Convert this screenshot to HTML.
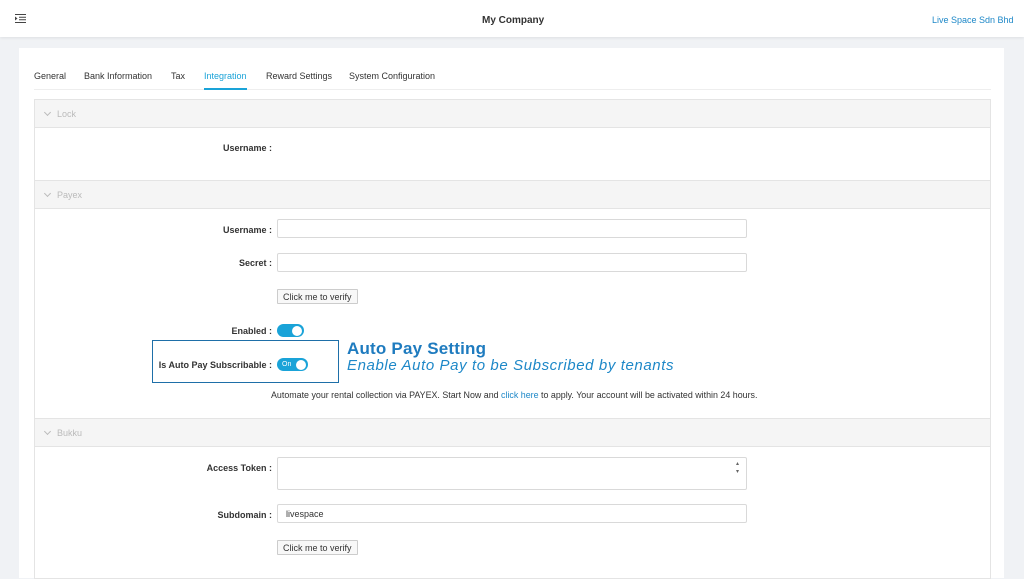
<!DOCTYPE html>
<html><head><style>
*{box-sizing:border-box;margin:0;padding:0}
body{width:1024px;height:566px;overflow:hidden;background:#f0f2f5;font-family:"Liberation Sans",sans-serif;font-size:9px;color:#333;position:relative}
.a{position:absolute}
.hdr{left:0;top:0;width:1024px;height:37px;background:#fff;box-shadow:0 1px 3px rgba(0,0,0,.08)}
.card{left:19px;top:48px;width:985px;height:530px;background:#fff}
.tab{top:71px;font-size:9px;color:#333}
.panel{left:34px;top:99px;width:957px;height:480px;border:1px solid #e4e4e4;background:#fff}
.ph{left:35px;width:955px;height:29px;background:#f5f5f5;border-top:1px solid #e4e4e4;border-bottom:1px solid #e4e4e4;color:#bbb;font-size:9px;line-height:28px;padding-left:22px}
.ph:before{content:"";position:absolute;left:10px;top:10px;width:4px;height:4px;border-right:1px solid #bbb;border-bottom:1px solid #bbb;transform:rotate(45deg)}
.lbl{width:240px;text-align:right;font-weight:bold;color:#333;font-size:9px}
.inp{left:277px;width:470px;height:19px;border:1px solid #d9d9d9;border-radius:2px;background:#fff;font-size:9px;padding:4px 8px}
.btn{left:277px;height:15px;border:1px solid #ccc;background:#f8f8f8;font-size:9px;padding:1px 5px;line-height:12px;border-radius:1px}
.tg{height:13px;border-radius:7px;background:#1aa3d8}
.tg i{position:absolute;width:10px;height:10px;border-radius:50%;background:#fff;top:1.5px}
</style></head><body>
<div class="a hdr"></div>
<svg class="a" style="left:15px;top:14px" width="11" height="9" viewBox="0 0 11 9"><path d="M0 0.5H11M4 3.2H11M4 5.8H11M0 8.5H11" stroke="#444" stroke-width="1"/><path d="M0 2.5L2.5 4.5L0 6.5Z" fill="#444"/></svg>
<div class="a" style="left:482px;top:15px;font-size:10px;font-weight:bold;color:#333">My Company</div>
<div class="a" style="left:932px;top:15px;font-size:9px;color:#1e88c8">Live Space Sdn Bhd</div>
<div class="a card"></div>
<div class="a tab" style="left:34px">General</div>
<div class="a tab" style="left:84px">Bank Information</div>
<div class="a tab" style="left:171px">Tax</div>
<div class="a tab" style="left:204px;color:#1aa3d8">Integration</div>
<div class="a tab" style="left:266px">Reward Settings</div>
<div class="a tab" style="left:349px">System Configuration</div>
<div class="a" style="left:34px;top:89px;width:957px;height:1px;background:#eee"></div>
<div class="a" style="left:204px;top:88px;width:43px;height:2px;background:#1aa3d8"></div>
<div class="a panel"></div>
<div class="a ph" style="top:99px">Lock</div>
<div class="a lbl" style="left:32px;top:143px">Username :</div>
<div class="a ph" style="top:180px">Payex</div>
<div class="a lbl" style="left:32px;top:225px">Username :</div>
<div class="a inp" style="top:219px"></div>
<div class="a lbl" style="left:32px;top:258px">Secret :</div>
<div class="a inp" style="top:253px"></div>
<div class="a btn" style="top:289px">Click me to verify</div>
<div class="a lbl" style="left:32px;top:326px">Enabled :</div>
<div class="a tg" style="left:277px;top:324px;width:27px"><i style="left:15px"></i></div>
<div class="a" style="left:152px;top:340px;width:187px;height:43px;border:1.5px solid #1e6fa8"></div>
<div class="a lbl" style="left:32px;top:360px">Is Auto Pay Subscribable :</div>
<div class="a tg" style="left:277px;top:358px;width:31px"><i style="left:19px"></i><span style="position:absolute;left:5px;top:2.5px;color:#fff;font-size:7px">On</span></div>
<div class="a" style="left:347px;top:339px;font-size:17px;font-weight:bold;color:#1e7bbf;letter-spacing:0.2px">Auto Pay Setting</div>
<div class="a" style="left:347px;top:357px;font-size:15px;font-style:italic;color:#1e88c8;letter-spacing:0.6px">Enable Auto Pay to be Subscribed by tenants</div>
<div class="a" style="left:271px;top:390px;font-size:8.9px">Automate your rental collection via PAYEX. Start Now and <span style="color:#1e88c8">click here</span> to apply. Your account will be activated within 24 hours.</div>
<div class="a ph" style="top:418px">Bukku</div>
<div class="a lbl" style="left:32px;top:463px">Access Token :</div>
<div class="a inp" style="top:457px;height:33px"></div>
<div class="a" style="left:736px;top:460px;font-size:6px;color:#666;line-height:8px">▴<br>▾</div>
<div class="a lbl" style="left:32px;top:510px">Subdomain :</div>
<div class="a inp" style="top:504px">livespace</div>
<div class="a btn" style="top:540px">Click me to verify</div>
</body></html>
